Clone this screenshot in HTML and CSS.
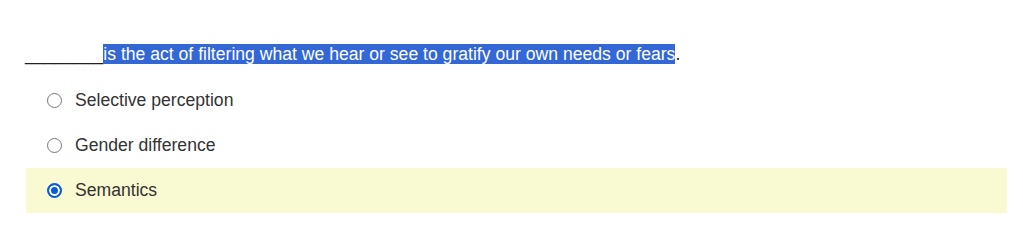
FILE: index.html
```html
<!DOCTYPE html>
<html lang="en">
<head>
    <meta charset="UTF-8">
    <meta name="viewport" content="width=device-width, initial-scale=1.0">
    <title>Question</title>
    <link rel="stylesheet" href="styles.css">
</head>
<body>
    <div class="quiz">
        <p class="question"><span class="blank">________</span><span class="selected">is the act of filtering what we hear or see to gratify our own needs or fears</span>.</p>

        <div class="options">
            <label class="option">
                <input type="radio" name="answer" value="1">
                <span>Selective perception</span>
            </label>
            <label class="option">
                <input type="radio" name="answer" value="2">
                <span>Gender difference</span>
            </label>
            <label class="option chosen">
                <input type="radio" name="answer" value="3" checked>
                <span>Semantics</span>
            </label>
        </div>
    </div>
</body>
</html>
```

FILE: styles.css
```css
/* Estilos básicos */
body {
    margin: 0;
    background-color: #ffffff;
    color: #333333;
    font-family: "Liberation Sans", Arial, sans-serif;
    font-size: 17.6px;
}

.quiz {
    padding: 42px 16px 0 26px;
}

.question {
    margin: 0 0 12px -1px;
    line-height: 24px;
    color: #222222;
}

.blank {
    color: #222222;
}

.selected {
    background-color: #3367d6;
    color: #ffffff;
}

/* Opciones */
.options {
    display: flex;
    flex-direction: column;
}

.option {
    display: flex;
    align-items: center;
    height: 45px;
    padding-left: 21px;
    cursor: pointer;
}

.option input {
    appearance: none;
    -webkit-appearance: none;
    box-sizing: border-box;
    width: 15px;
    height: 15px;
    margin: 0 13px 0 0;
    border: 1px solid #767676;
    border-radius: 50%;
    background-color: #ffffff;
    flex-shrink: 0;
}

.option input:checked {
    border: 2px solid #0a5bd6;
    background-color: #0a5bd6;
    box-shadow: inset 0 0 0 2px #ffffff;
}

.option.chosen {
    background-color: #fafad2;
}
```
